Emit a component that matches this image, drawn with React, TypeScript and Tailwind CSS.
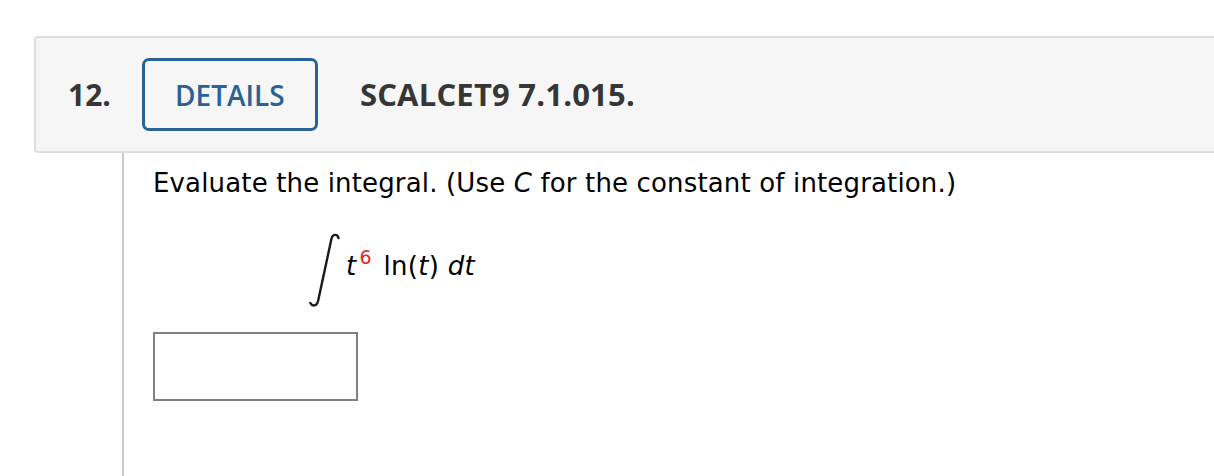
export default function App() {
  return (
    <div className="min-h-[476px] w-[1214px] overflow-hidden bg-white pt-[36px] pl-[34px]">
      {/* Question header */}
      <div className="flex h-[117px] items-center rounded-tl-[4px] rounded-bl-[4px] border-2 border-r-0 border-[#dedede] bg-[#f6f6f6] pl-[32px] font-['Open_Sans',sans-serif] text-[#363636]">
        <span className="text-[30px] font-bold">12.</span>
        <button className="ml-[31px] flex h-[73px] w-[176px] items-center justify-center rounded-[7px] border-[3px] border-[#2a6295] text-[28px] font-semibold text-[#2a6295]">
          DETAILS
        </button>
        <span className="ml-[42px] text-[31px] font-bold tracking-[0.2px]">SCALCET9 7.1.015.</span>
      </div>

      {/* Question body */}
      <div className="ml-[88px] min-h-[330px] border-l-2 border-[#cccccc] pl-[29px] pt-[15px] font-['DejaVu_Sans',sans-serif] text-black">
        <p className="text-[26px] leading-[30px] tracking-[0.15px]">
          Evaluate the integral. (Use <i>C</i> for the constant of integration.)
        </p>
        <div className="mt-[35px] ml-[156px] flex h-[74px] items-start">
          <svg width="31" height="74" viewBox="0 0 31 74" className="shrink-0">
            <path
              d="M29.5 5 C28.5 0.8 23.5 0.5 22.3 6.5 L9.2 67.5 C8 73.5 3.2 73.6 1.3 70"
              fill="none"
              stroke="#1a1a1a"
              strokeWidth="2.4"
              strokeLinecap="round"
            />
          </svg>
          <span className="ml-[6px] mt-[15px] whitespace-nowrap text-[26px] leading-[36px] tracking-[0.3px]">
            <i>t</i>
            <span className="relative -top-[11px] ml-[3px] mr-[3px] text-[19px] text-[#e8231c]">6</span> ln(<i>t</i>) <i>dt</i>
          </span>
        </div>
        <input className="mt-[25px] block h-[69px] w-[205px] border-2 border-[#808080] bg-white" />
      </div>
    </div>
  );
}
